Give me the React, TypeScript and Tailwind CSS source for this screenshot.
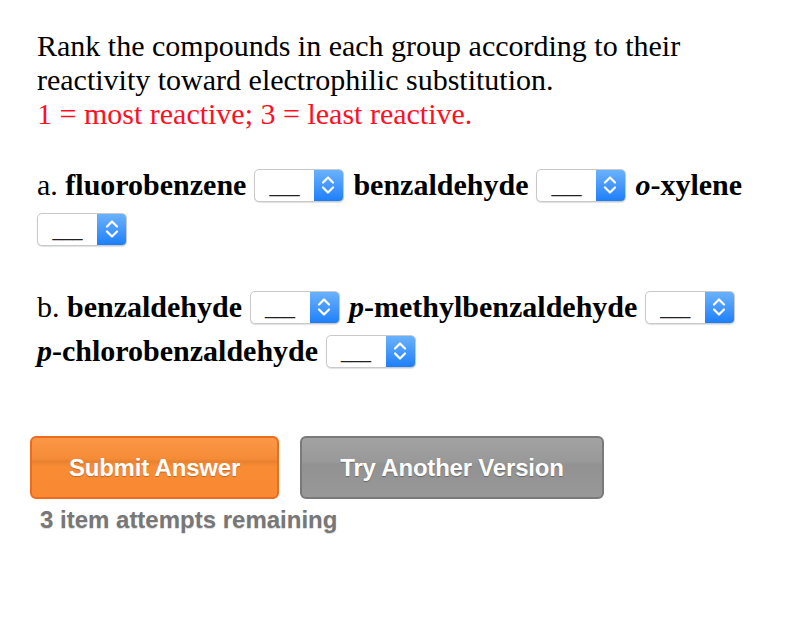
function RankSelect() {
  return (
    <span className="mr-[2px] inline-flex h-[33px] w-[90px] translate-y-[-3px] overflow-hidden rounded-[5px] border border-[#c9c9c9] bg-white align-middle shadow-[0_1px_1px_rgba(0,0,0,0.12)]">
      <span className="flex flex-1 items-end justify-center pb-[6px] font-['Liberation_Sans',sans-serif] text-[18px] font-normal leading-none text-[#222]">
        ___
      </span>
      <span className="flex w-[29px] items-center justify-center bg-gradient-to-b from-[#69b1fb] to-[#1a7ffb]">
        <svg width="14" height="22" viewBox="0 0 14 22" fill="none" stroke="white" strokeWidth="2.2" strokeLinecap="round" strokeLinejoin="round">
          <path d="M2 8.5 L7 3.5 L12 8.5" />
          <path d="M2 13.5 L7 18.5 L12 13.5" />
        </svg>
      </span>
    </span>
  );
}

export default function App() {
  return (
    <div className="min-h-[628px] w-[792px] bg-white px-[30px] pt-[29px] font-['Liberation_Serif',serif] text-black">
      <div className="w-[730px] pl-[7px]">
        <p className="text-[30px] leading-[34px]">
          Rank the compounds in each group according to their reactivity toward electrophilic substitution.
          <br />
          <span className="text-[#ff0f23]">1 = most reactive; 3 = least reactive.</span>
        </p>

        <p className="mt-[32px] text-[30px] leading-[44px]">
          a. <b>fluorobenzene</b> <RankSelect /> <b>benzaldehyde</b> <RankSelect />{' '}
          <b>
            <i>o</i>-xylene
          </b>{' '}
          <RankSelect />
        </p>

        <p className="mt-[34px] text-[30px] leading-[44px]">
          b. <b>benzaldehyde</b> <RankSelect />{' '}
          <b>
            <i>p</i>-methylbenzaldehyde
          </b>{' '}
          <RankSelect />{' '}
          <b>
            <i>p</i>-chlorobenzaldehyde
          </b>{' '}
          <RankSelect />
        </p>
      </div>

      <div className="mt-[63px] flex gap-[21px] font-['Liberation_Sans',sans-serif]">
        <button className="h-[63px] w-[249px] rounded-[6px] border-2 border-[#ee6a1f] bg-[linear-gradient(to_bottom,#fb9846_0%,#f48b37_35%,#e9822f_40%,#f98b35_48%,#f98a33_100%)] text-[24px] font-bold tracking-[-0.2px] text-white [text-shadow:0_1px_1px_rgba(0,0,0,0.25)]">
          Submit Answer
        </button>
        <button className="h-[63px] w-[304px] rounded-[6px] border-2 border-[#7a7a7a] bg-[linear-gradient(to_bottom,#a2a2a2_0%,#999_40%,#929292_45%,#989898_100%)] text-[24px] font-bold tracking-[-0.2px] text-white [text-shadow:0_1px_1px_rgba(0,0,0,0.3)]">
          Try Another Version
        </button>
      </div>

      <p className="ml-[10px] mt-[6px] font-['Liberation_Sans',sans-serif] text-[24px] font-bold leading-[30px] text-[#777] [text-shadow:0_1px_1px_rgba(0,0,0,0.15)]">
        3 item attempts remaining
      </p>
    </div>
  );
}
